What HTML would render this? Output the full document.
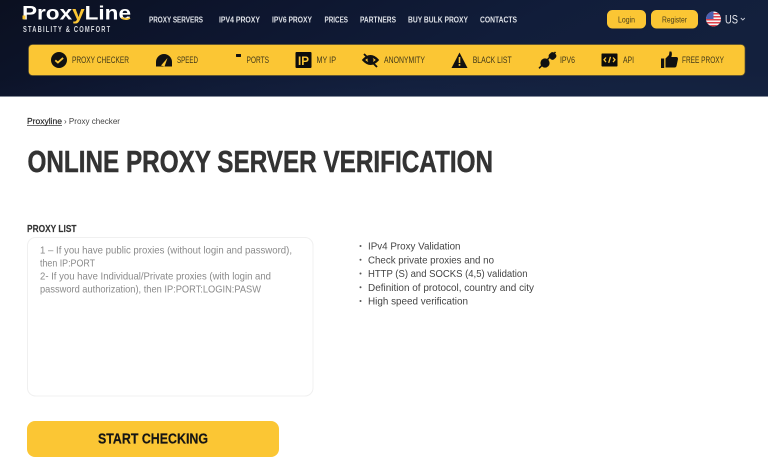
<!DOCTYPE html>
<html><head><meta charset="utf-8"><title>ProxyLine</title>
<style>
html,body{margin:0;padding:0;background:#fff;width:768px;height:470px;overflow:hidden}
svg{display:block}
text{font-family:"Liberation Sans",sans-serif}
</style></head><body>
<svg width="768" height="470" viewBox="0 0 768 470" xmlns="http://www.w3.org/2000/svg">
<defs>
<linearGradient id="bg" x1="0" y1="0" x2="1" y2="0.25">
<stop offset="0" stop-color="#0b1020"/><stop offset="0.3" stop-color="#0d152d"/><stop offset="0.7" stop-color="#111d3a"/><stop offset="1" stop-color="#13203d"/>
</linearGradient>
<radialGradient id="glow" cx="0.6" cy="1" r="0.7">
<stop offset="0" stop-color="#1a2a4c" stop-opacity=".35"/><stop offset="1" stop-color="#1a2a4c" stop-opacity="0"/>
</radialGradient>
<clipPath id="fc"><circle cx="713.5" cy="19" r="7.5"/></clipPath>
</defs>
<rect width="768" height="470" fill="#fff"/>
<rect width="768" height="96.5" fill="url(#bg)"/>
<rect y="50" width="768" height="46.5" fill="url(#glow)"/>
<rect y="96" width="768" height="1" fill="#7c8494" opacity=".5"/>

<!-- logo -->
<text x="22" y="19.3" font-size="19.5" font-weight="bold" fill="#fff" textLength="109" lengthAdjust="spacingAndGlyphs">Prox<tspan fill="#fbc634">y</tspan>Line</text>
<rect x="22.5" y="15.5" width="3" height="3.8" fill="#fbc634"/>
<path d="M121.500 17.800q4 2.600 8.500.2" fill="none" stroke="#fbc634" stroke-width="1.800"/>
<text transform="translate(23 32) scale(.72 1)" font-size="8" font-weight="bold" fill="#d9dbe0" textLength="121" lengthAdjust="spacing">STABILITY &amp; COMFORT</text>

<!-- nav -->
<g font-size="8.500" font-weight="bold" fill="#dfe2e8">
<text x="149" y="22.500" textLength="54" lengthAdjust="spacingAndGlyphs">PROXY SERVERS</text>
<text x="219" y="22.500" textLength="41" lengthAdjust="spacingAndGlyphs">IPV4 PROXY</text>
<text x="272" y="22.500" textLength="40" lengthAdjust="spacingAndGlyphs">IPV6 PROXY</text>
<text x="324.500" y="22.500" textLength="23.500" lengthAdjust="spacingAndGlyphs">PRICES</text>
<text x="360" y="22.500" textLength="36" lengthAdjust="spacingAndGlyphs">PARTNERS</text>
<text x="408" y="22.500" textLength="60" lengthAdjust="spacingAndGlyphs">BUY BULK PROXY</text>
<text x="480" y="22.500" textLength="37" lengthAdjust="spacingAndGlyphs">CONTACTS</text>
</g>

<!-- login -->
<rect x="607" y="10" width="39" height="18.500" rx="5.500" fill="#fbc634"/>
<rect x="651" y="10" width="47" height="18.500" rx="5.500" fill="#fbc634"/>
<g font-size="8.500" fill="#4a3f1c">
<text x="618" y="22.500" textLength="17" lengthAdjust="spacingAndGlyphs">Login</text>
<text x="662" y="22.500" textLength="25" lengthAdjust="spacingAndGlyphs">Register</text>
</g>

<!-- flag -->
<g clip-path="url(#fc)">
<rect x="706" y="11.500" width="15" height="15" fill="#f4f4f6"/>
<g fill="#e0404a"><rect x="706" y="13" width="15" height="1.500"/><rect x="706" y="16" width="15" height="1.500"/><rect x="706" y="19" width="15" height="1.500"/><rect x="706" y="22" width="15" height="1.500"/><rect x="706" y="25" width="15" height="1.500"/></g>
<rect x="706" y="11.500" width="7.500" height="7.500" fill="#4a5fb0"/>
</g>
<text x="725" y="23.300" font-size="11.500" fill="#e6e8ee" textLength="13" lengthAdjust="spacingAndGlyphs">US</text>
<path d="M740.800 18l2 2 2-2" fill="none" stroke="#c8ccd6" stroke-width=".9"/>

<!-- subnav -->
<rect x="28.500" y="44.500" width="716.500" height="31" rx="4" fill="#fbc634" stroke="#5a5030" stroke-width=".7"/>
<g font-size="9" fill="#3f3719">
<text x="72" y="63" textLength="57" lengthAdjust="spacingAndGlyphs">PROXY CHECKER</text>
<text x="177" y="63" textLength="21" lengthAdjust="spacingAndGlyphs">SPEED</text>
<text x="246.500" y="63" textLength="22.500" lengthAdjust="spacingAndGlyphs">PORTS</text>
<text x="316.500" y="63" textLength="19.500" lengthAdjust="spacingAndGlyphs">MY IP</text>
<text x="384" y="63" textLength="41" lengthAdjust="spacingAndGlyphs">ANONYMITY</text>
<text x="472.700" y="63" textLength="39" lengthAdjust="spacingAndGlyphs">BLACK LIST</text>
<text x="560" y="63" textLength="15" lengthAdjust="spacingAndGlyphs">IPV6</text>
<text x="623" y="63" textLength="11" lengthAdjust="spacingAndGlyphs">API</text>
<text x="682" y="63" textLength="42" lengthAdjust="spacingAndGlyphs">FREE PROXY</text>
</g>

<!-- icons -->
<circle cx="59" cy="60" r="8" fill="#111"/>
<path d="M55.300 60.300l2.600 2.300 5.200-4.700" fill="none" stroke="#fbc634" stroke-width="1.800"/>
<path d="M156 66.500v-4.500a8 8 0 0 1 16 0v4.500z" fill="#111"/>
<path d="M161 65.500l6.500-7.500-3 8.500z" fill="#fbc634"/>
<rect x="236" y="54" width="5" height="3" rx=".5" fill="#111"/>
<rect x="295.500" y="52" width="16" height="16" rx="1" fill="#0c0c0c"/>
<text x="298" y="65" font-size="12" font-weight="bold" fill="#fbc634" textLength="11" lengthAdjust="spacingAndGlyphs">IP</text>
<path d="M363.500 60q7-7.500 14 0q-7 7.500-14 0z" fill="none" stroke="#111" stroke-width="2.400"/>
<circle cx="370.500" cy="60" r="3" fill="#111"/>
<path d="M364 54l13 13" stroke="#111" stroke-width="1.900"/>
<path d="M459.500 52.500l8 15.500h-16z" fill="#111"/>
<rect x="458.700" y="57" width="1.600" height="6" fill="#fbc634"/><rect x="458.700" y="64" width="1.600" height="1.800" fill="#fbc634"/>
<circle cx="545" cy="63" r="4.600" fill="#111"/>
<rect x="549" y="52.500" width="7" height="7" rx="2.500" transform="rotate(45 552.500 56)" fill="#111"/>
<path d="M539 68.300l3-3M552 56l3.500-4M547 60l3-3" stroke="#111" stroke-width="1.500"/>
<rect x="601.500" y="53.500" width="16" height="13" rx=".7" fill="#0c0c0c"/>
<path d="M606 57.500l-2 2.300 2 2.300M613 57.500l2 2.300-2 2.300M610.500 56.800l-1.800 6" fill="none" stroke="#fbc634" stroke-width="1.300"/>
<rect x="661" y="58.500" width="3.200" height="9.500" fill="#111"/>
<path d="M665.500 58.500l3.500-3.500.5-3.500h1.800q1.200 2 0 5.500h5q1.700 0 1.700 2l-1.500 7q-.4 1.500-2 1.500h-9z" fill="#111"/>

<!-- breadcrumb -->
<text x="27" y="124" font-size="8.500" fill="#222" textLength="35" lengthAdjust="spacingAndGlyphs" stroke="#222" stroke-width=".15">Proxyline</text>
<rect x="27" y="125.300" width="35" height=".7" fill="#333"/>
<text x="64" y="124" font-size="8.500" fill="#444" textLength="56" lengthAdjust="spacingAndGlyphs">› Proxy checker</text>

<!-- heading -->
<text x="27.500" y="172" font-size="31" font-weight="bold" fill="#333" stroke="#333" stroke-width=".5" textLength="465.500" lengthAdjust="spacingAndGlyphs">ONLINE PROXY SERVER VERIFICATION</text>

<!-- label -->
<text x="27" y="231.800" font-size="10" font-weight="bold" fill="#333" stroke="#333" stroke-width=".15" textLength="49.500" lengthAdjust="spacingAndGlyphs">PROXY LIST</text>

<!-- textarea -->
<rect x="27.500" y="237.500" width="285.500" height="158.500" rx="8" fill="#fff" stroke="#f0f0f0"/>
<g font-size="10.500" fill="#8a8a8a">
<text x="40" y="253.500" textLength="252" lengthAdjust="spacingAndGlyphs">1 – If you have public proxies (without login and password),</text>
<text x="40" y="266.500" textLength="55" lengthAdjust="spacingAndGlyphs">then IP:PORT</text>
<text x="40" y="279.500" textLength="231" lengthAdjust="spacingAndGlyphs">2- If you have Individual/Private proxies (with login and</text>
<text x="40" y="292.500" textLength="221" lengthAdjust="spacingAndGlyphs">password authorization), then IP:PORT:LOGIN:PASW</text>
</g>

<!-- list -->
<g font-size="10.500" fill="#444">
<text x="368" y="249.500" textLength="92.500" lengthAdjust="spacingAndGlyphs">IPv4 Proxy Validation</text>
<text x="368" y="263.300" textLength="126" lengthAdjust="spacingAndGlyphs">Check private proxies and no</text>
<text x="368" y="277" textLength="159.500" lengthAdjust="spacingAndGlyphs">HTTP (S) and SOCKS (4,5) validation</text>
<text x="368" y="290.800" textLength="166" lengthAdjust="spacingAndGlyphs">Definition of protocol, country and city</text>
<text x="368" y="304.500" textLength="100" lengthAdjust="spacingAndGlyphs">High speed verification</text>
</g>
<g fill="#555">
<circle cx="360.500" cy="246" r="1"/><circle cx="360.500" cy="259.800" r="1"/><circle cx="360.500" cy="273.500" r="1"/><circle cx="360.500" cy="287.300" r="1"/><circle cx="360.500" cy="301" r="1"/>
</g>

<!-- button -->
<rect x="27" y="421" width="252" height="36" rx="8" fill="#fbc634"/>
<text x="98" y="443.500" font-size="14.500" font-weight="bold" fill="#141414" stroke="#141414" stroke-width=".2" textLength="110" lengthAdjust="spacingAndGlyphs">START CHECKING</text>
</svg>
</body></html>
